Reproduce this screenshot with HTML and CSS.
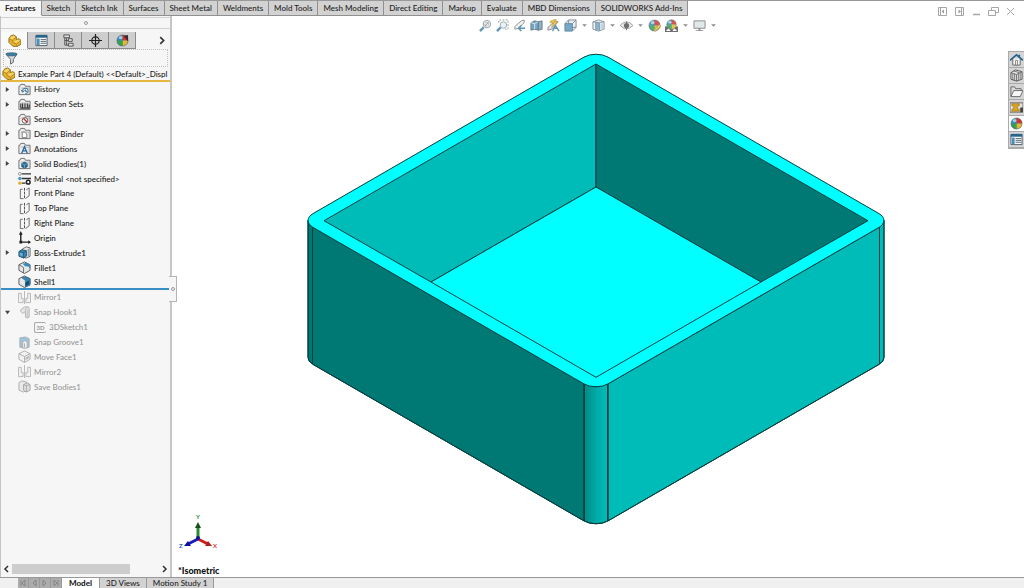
FILE: index.html
```
<!DOCTYPE html>
<html lang="en">
<head>
	<meta charset="UTF-8">
	<title>Example Part 4</title>
	<link rel="stylesheet" href="styles.css">
</head>
<body>
	<!-- icon symbols -->
	<svg class="defs" width="0" height="0" aria-hidden="true">
		<symbol id="part" viewBox="0 0 14 14">
			<path d="M1 5l2-3 3-1 3 2v3l3-1 2 2v4l-5 3-4-1-4-4z" fill="#e6b32e" stroke="#8c6a17"/>
			<path d="M1 5l4 2 4-4M5 7v2l4 2 5-4M9 11v3" fill="none" stroke="#a67f1e" stroke-width=".8"/>
			<path d="M3 3l3-1 2 1-3 3-3-1zM6 8l5-2 2 1-4 3z" fill="#f6d368"/>
		</symbol>
		<symbol id="list" viewBox="0 0 14 14">
			<path d="M1 1.500h12v11H1z" fill="#f4f8fa" stroke="#4c5b66"/>
			<path d="M1 1h12v3H1z" fill="#28658c"/>
			<path d="M2 5h3v7H2z" fill="#4a90b8"/>
			<path d="M6 6h6M6 8h6M6 10h6" stroke="#59666e"/>
		</symbol>
		<symbol id="config" viewBox="0 0 14 14">
			<path d="M2 1h6v3H2zM7 5h4v3H7zM7 10h5v3H7z" fill="#e4e4e4" stroke="#505050"/>
			<path d="M3 4v8h4M3 7h4M5 4v8" fill="none" stroke="#505050"/>
		</symbol>
		<symbol id="target" viewBox="0 0 14 14">
			<circle cx="7" cy="7" r="4" fill="none" stroke="#222" stroke-width="1.300"/>
			<path d="M7 0v14M0 7h14" stroke="#222" stroke-width="1.300"/>
		</symbol>
		<symbol id="ball" viewBox="0 0 14 14">
			<circle cx="7" cy="7" r="6" fill="#2f8fc0"/>
			<path d="M7 7V1a6 6 0 0 1 6 6z" fill="#d5342c"/>
			<path d="M7 7h6a6 6 0 0 1-6 6z" fill="#e6b82c"/>
			<path d="M7 7v6a6 6 0 0 1-6-6z" fill="#36a052"/>
			<circle cx="7" cy="7" r="6" fill="none" stroke="#666" stroke-width=".6"/>
			<ellipse cx="5" cy="4" rx="2" ry="1.500" fill="#fff" opacity=".6"/>
		</symbol>
		<symbol id="ball-dark" viewBox="0 0 14 14">
			<use href="#ball"/>
			<path d="M8 2l5-1v7z" fill="#40282a"/>
		</symbol>
		<symbol id="funnel" viewBox="0 0 14 14">
			<path d="M1 2l5 6v5l3-2V8l4-6z" fill="#d7dde0" stroke="#566067"/>
			<ellipse cx="7" cy="2.500" rx="6" ry="1.800" fill="#3a80a8" stroke="#35566a" stroke-width=".7"/>
		</symbol>
		<symbol id="folder" viewBox="0 0 14 14">
			<path d="M1 3.500h1l1-2h4l1 2h5v9H1z" fill="#ededed" stroke="#6c6c6c"/>
			<path d="M3 5.500h9v6" fill="none" stroke="#b3b3b3"/>
		</symbol>
		<symbol id="history" viewBox="0 0 14 14">
			<use href="#folder"/>
			<path d="M5 9a3 3 0 1 1 3 2.500M3.500 7.500L5 10l2-2M8 7v2h2" fill="none" stroke="#2d6d95"/>
		</symbol>
		<symbol id="sets" viewBox="0 0 14 14">
			<use href="#folder"/>
			<path d="M3 6v5h9V7M5 6v5M7.500 6v5M10 6v5" fill="none" stroke="#333" stroke-width="1.300"/>
		</symbol>
		<symbol id="sensor" viewBox="0 0 14 14">
			<use href="#folder"/>
			<circle cx="7.500" cy="8" r="3" fill="#fff" stroke="#555"/>
			<path d="M6 6l4 4" stroke="#c2352e" stroke-width="1.600"/>
		</symbol>
		<symbol id="binder" viewBox="0 0 14 14">
			<use href="#folder"/>
			<path d="M4.500 5.500h3l2 2v4h-5z" fill="#fff" stroke="#777"/>
		</symbol>
		<symbol id="annot" viewBox="0 0 14 14">
			<use href="#folder"/>
			<path d="M4 12l3-7 3 7M5 9.500h4" fill="none" stroke="#28699a" stroke-width="1.400"/>
		</symbol>
		<symbol id="bodies" viewBox="0 0 14 14">
			<use href="#folder"/>
			<path d="M4 7l3-1.500 3 1.500v3.500L7 12l-3-1.500z" fill="#286c99" stroke="#174b70" stroke-width=".7"/>
			<path d="M4 7l3 1.500L10 7M7 8.500V12" fill="none" stroke="#8fc0dc" stroke-width=".6"/>
		</symbol>
		<symbol id="material" viewBox="0 0 14 14">
			<path d="M4 2h10M4 7h10M4 12h4" stroke="#333" stroke-width="1.500"/>
			<circle cx="2" cy="2" r="1.500" fill="#fff" stroke="#777" stroke-width=".8"/>
			<circle cx="2" cy="7" r="1.800" fill="#4b9ac7"/>
			<circle cx="2" cy="12" r="1.800" fill="#dfb02c"/>
			<circle cx="11" cy="11" r="2" fill="#fff" stroke="#222" stroke-width="1.600"/>
		</symbol>
		<symbol id="plane" viewBox="0 0 14 14">
			<path d="M5 2.500H2.500v10H6M9 3l3-2v8.500L8 12.500" fill="none" stroke="#666"/>
			<path d="M7 1v12" stroke="#444" stroke-dasharray="3 1"/>
		</symbol>
		<symbol id="origin" viewBox="0 0 14 14">
			<path d="M3 3v9h10" fill="none" stroke="#222" stroke-width="1.500"/>
			<path d="M3 0L1 4h4zM14 12l-3-2v4zM1.500 10.500h3v3h-3z" fill="#222"/>
		</symbol>
		<symbol id="extrude" viewBox="0 0 14 14">
			<path d="M5 3l4-2 4 1v9l-4 2-4-1z" fill="#e9e9e9" stroke="#5b6265"/>
			<path d="M1 6l3-2 5 1v6l-3 2-5-2z" fill="#3d86b3" stroke="#21516f"/>
			<path d="M1 6l5 1 3-2M6 7v6M11 3v8" fill="none" stroke="#214f6c" stroke-width=".7"/>
			<path d="M2 7l3 1v3l-3-1z" fill="#6db0d6"/>
		</symbol>
		<symbol id="fillet" viewBox="0 0 14 14">
			<path d="M1 4l6-3 6 3v6l-6 3.500L1 10z" fill="#e6e8e9" stroke="#555"/>
			<path d="M1 4l5 3v6" fill="none" stroke="#666"/>
			<path d="M5 3l4-1 4 2v4Q11 5 8 6z" fill="#3b8ab9"/>
		</symbol>
		<symbol id="shell" viewBox="0 0 14 14">
			<path d="M1 4l6-3 6 3v6l-6 3.500L1 10z" fill="#e6e8e9" stroke="#555"/>
			<path d="M4 3l4-1 5 2v7l-5 2V6z" fill="#3984b2" stroke="#2a6287" stroke-width=".6"/>
			<path d="M8 8l4-2v4l-4 2z" fill="#154a6c"/>
		</symbol>
		<symbol id="mirror" viewBox="0 0 14 14">
			<path d="M.500 2.500v10h5V8H3.500V2.500zM13.500 2.500v10h-5V8h2V2.500z" fill="#eee" stroke="#777"/>
			<path d="M7 0v14" stroke="#555" stroke-width=".8"/>
		</symbol>
		<symbol id="hook" viewBox="0 0 14 14">
			<path d="M3 4l4-3h4l1 1v10l-2 1-2-1V6L5 8 3 6z" fill="#d5d5d5" stroke="#6f6f6f"/>
			<path d="M8 6V3l3-2M10 4v9" fill="none" stroke="#888"/>
		</symbol>
		<symbol id="groove" viewBox="0 0 14 14">
			<path d="M2 2l6-1 4 2v9l-5 1-5-1z" fill="#4993be" stroke="#5d6c75"/>
			<path d="M5 13V7l2-2 3 1v7zM7 8v4" fill="#e5e5e5" stroke="#666"/>
		</symbol>
		<symbol id="cube" viewBox="0 0 14 14">
			<path d="M1 4l6-3 6 3v6l-6 3.500L1 10z" fill="#ededed" stroke="#666"/>
			<path d="M1 4l6 3 6-3M7 7v6" fill="none" stroke="#666"/>
			<path d="M8 8l4-2v3l-4 2z" fill="#888"/>
		</symbol>
		<symbol id="save" viewBox="0 0 14 14">
			<path d="M1 3l3-2 5 1v9l-3 2-5-2z" fill="#ddd" stroke="#666"/>
			<path d="M6 5l4-2 3 2v6l-4 2-3-2z" fill="#cdcdcd" stroke="#555"/>
			<path d="M6 5l3 1 4-1M9 6v7" fill="none" stroke="#555"/>
		</symbol>
		<symbol id="zoom-fit" viewBox="0 0 14 14">
			<path d="M1 13l4-4" stroke="#4684ac" stroke-width="2.500"/>
			<circle cx="8.500" cy="5.500" r="4" fill="#f2f6f8" stroke="#7c868c"/>
			<path d="M7 4h3v3M7 7l3-3M6.500 5v2.500H9" fill="none" stroke="#777" stroke-width=".7"/>
		</symbol>
		<symbol id="zoom-area" viewBox="0 0 14 14">
			<path d="M1 13l4-4" stroke="#4684ac" stroke-width="2.500"/>
			<circle cx="8" cy="6.500" r="3.500" fill="#e5f0f6" stroke="#8a969c"/>
			<path d="M3 4V1h10v10h-3" fill="none" stroke="#8b8b8b" stroke-dasharray="2 1.500"/>
		</symbol>
		<symbol id="prev" viewBox="0 0 14 14">
			<path d="M2 8l7-6 3-1v3l-6 6-4 1z" fill="#eee" stroke="#7e7e7e"/>
			<path d="M13 10H6M9 7l-3 3 3 3" fill="none" stroke="#437fa7" stroke-width="1.600"/>
		</symbol>
		<symbol id="section" viewBox="0 0 14 14">
			<path d="M1 4l4-2 4 1v9l-4-1-4 1z" fill="#5c97bd" stroke="#50636e"/>
			<path d="M1 4l4 1 4-2M5 5v6" fill="none" stroke="#d3e2eb"/>
			<path d="M9 3l4-1v9l-4 1z" fill="#78a5c1" stroke="#4e6472"/>
		</symbol>
		<symbol id="dynamic" viewBox="0 0 14 14">
			<path d="M1 9l8-7 3 1-7 8-4 1z" fill="#ddd" stroke="#777"/>
			<path d="M4 2l6-2-2 3h4l-7 6 2-5H3z" fill="#eac03c" stroke="#a98117" stroke-width=".6"/>
			<path d="M6 13l3-6 4 6M8 10h3" fill="none" stroke="#4883a8" stroke-width="1.500"/>
		</symbol>
		<symbol id="orient" viewBox="0 0 14 14">
			<path d="M4 1h9v8l-4 4V5H1z" fill="#e4edf2"/>
			<path d="M1 5h8v8H1z" fill="#5e9abf" stroke="#4a7088"/>
			<path d="M1 5l4-4h8v8l-4 4M9 5l4-4M5 1v4M9 9h4" fill="none" stroke="#687782"/>
		</symbol>
		<symbol id="display" viewBox="0 0 14 14">
			<path d="M1 3l6-2 6 2v8l-6 2-6-2z" fill="#e9eff3" stroke="#6f7d85"/>
			<path d="M4 3l4 1v9l-4-1z" fill="#75a9c9"/>
			<path d="M1 3l7 1 5-1M4 3v9M8 4v9" fill="none" stroke="#65747d" stroke-width=".8"/>
			<path d="M9 5l3-1v7l-3 1z" fill="#b5d2e3"/>
		</symbol>
		<symbol id="eye" viewBox="0 0 14 14">
			<path d="M0 7q7-8 14 0-7 7-14 0z" fill="#e4e4e4" stroke="#8d8d8d"/>
			<circle cx="7" cy="7" r="2.800" fill="#555"/>
			<path d="M7 3v9" stroke="#555"/>
		</symbol>
		<symbol id="appearance" viewBox="0 0 14 14">
			<use href="#ball"/>
			<path d="M6 12l6-6 2 2-6 5z" fill="#e8c149" stroke="#8f7540" stroke-width=".7"/>
		</symbol>
		<symbol id="scene" viewBox="0 0 14 14">
			<path d="M0 8h14v6H0z" fill="#555"/>
			<path d="M1 13l3-3 2 3zM8 13l2-3 3 3z" fill="#fff"/>
			<use href="#ball" x="1" width="12" height="12"/>
		</symbol>
		<symbol id="monitor" viewBox="0 0 14 14">
			<path d="M1 2h12v8H1z" fill="#dce2e5" stroke="#777"/>
			<path d="M6 10h2v2h3v1H3v-1h3z" fill="#777"/>
		</symbol>
		<symbol id="home" viewBox="0 0 14 14">
			<path d="M3 6v7h8V6" fill="#f4f4f4" stroke="#666"/>
			<path d="M0 8l7-6 7 6M10 2v3" fill="none" stroke="#25648b" stroke-width="1.800"/>
			<path d="M6 8h2v5H6z" fill="#fff" stroke="#666" stroke-width=".8"/>
		</symbol>
		<symbol id="library" viewBox="0 0 14 14">
			<path d="M1 4l5-3 7 2v8l-6 2-6-2z" fill="#e5e5e5" stroke="#555"/>
			<path d="M1 4l6 2 6-3M3 5v7M5 5v7M7 6v7M9 5v7M11 4v7M4 2l6 2" fill="none" stroke="#555" stroke-width=".8"/>
		</symbol>
		<symbol id="open" viewBox="0 0 14 14">
			<path d="M1 12V2h4l1 2h6v2" fill="#ddd" stroke="#666"/>
			<path d="M1 12.500L4 6h10l-3 6.500z" fill="#f7f7f7" stroke="#666"/>
		</symbol>
		<symbol id="palette" viewBox="0 0 14 14">
			<path d="M0 2h14v10H0z" fill="#e2e2e2" stroke="#666"/>
			<path d="M2 3h8v2L8 6v2l2 1v2H2V9l2-1V6L2 5z" fill="#dca521" stroke="#8e691a" stroke-width=".6"/>
			<path d="M11 7h3v5h-3z" fill="#444"/>
		</symbol>
		<symbol id="tri" viewBox="0 0 6 6"><path d="M1 0l4 3-4 3z" fill="#444"/></symbol>
		<symbol id="tri-down" viewBox="0 0 6 6"><path d="M0 1h6L3 5z" fill="#444"/></symbol>
		<symbol id="drop" viewBox="0 0 6 6"><path d="M1 2h4L3 4z" fill="#777"/></symbol>
		<symbol id="right" viewBox="0 0 6 8"><path d="M1 1l3 3-3 3" fill="none" stroke="#333" stroke-width="1.500"/></symbol>
		<symbol id="left" viewBox="0 0 6 8"><path d="M5 1L2 4l3 3" fill="none" stroke="#333" stroke-width="1.500"/></symbol>
	</svg>

	<nav class="ribbon">
		<button class="active">Features</button>
		<button>Sketch</button>
		<button>Sketch Ink</button>
		<button>Surfaces</button>
		<button>Sheet Metal</button>
		<button>Weldments</button>
		<button>Mold Tools</button>
		<button>Mesh Modeling</button>
		<button>Direct Editing</button>
		<button>Markup</button>
		<button>Evaluate</button>
		<button>MBD Dimensions</button>
		<button>SOLIDWORKS Add-Ins</button>
	</nav>

	<main class="work">
		<aside class="panel">
			<div class="grip"><i></i></div>
			<div class="panel-tabs">
				<button class="active" aria-label="Feature tree"><svg><use href="#part"/></svg></button>
				<button aria-label="Properties"><svg><use href="#list"/></svg></button>
				<button aria-label="Configurations"><svg><use href="#config"/></svg></button>
				<button aria-label="Dimensions"><svg><use href="#target"/></svg></button>
				<button aria-label="Display"><svg><use href="#ball-dark"/></svg></button>
				<button class="more" aria-label="More tabs"><svg><use href="#right"/></svg></button>
			</div>
			<label class="filter">
				<svg><use href="#funnel"/></svg>
				<input type="text" aria-label="Filter tree">
			</label>
			<div class="root"><svg><use href="#part"/></svg><span>Example Part 4 (Default) &lt;&lt;Default&gt;_Displ</span></div>
			<ul class="tree">
				<li><button aria-label="Expand"><svg><use href="#tri"/></svg></button><svg><use href="#history"/></svg>History</li>
				<li><button aria-label="Expand"><svg><use href="#tri"/></svg></button><svg><use href="#sets"/></svg>Selection Sets</li>
				<li><svg><use href="#sensor"/></svg>Sensors</li>
				<li><button aria-label="Expand"><svg><use href="#tri"/></svg></button><svg><use href="#binder"/></svg>Design Binder</li>
				<li><button aria-label="Expand"><svg><use href="#tri"/></svg></button><svg><use href="#annot"/></svg>Annotations</li>
				<li><button aria-label="Expand"><svg><use href="#tri"/></svg></button><svg><use href="#bodies"/></svg>Solid Bodies(1)</li>
				<li><svg><use href="#material"/></svg>Material &lt;not specified&gt;</li>
				<li><svg><use href="#plane"/></svg>Front Plane</li>
				<li><svg><use href="#plane"/></svg>Top Plane</li>
				<li><svg><use href="#plane"/></svg>Right Plane</li>
				<li><svg><use href="#origin"/></svg>Origin</li>
				<li><button aria-label="Expand"><svg><use href="#tri"/></svg></button><svg><use href="#extrude"/></svg>Boss-Extrude1</li>
				<li><svg><use href="#fillet"/></svg>Fillet1</li>
				<li class="rollback"><svg><use href="#shell"/></svg>Shell1</li>
				<li class="off"><svg><use href="#mirror"/></svg>Mirror1</li>
				<li class="off"><button aria-label="Collapse"><svg><use href="#tri-down"/></svg></button><svg><use href="#hook"/></svg>Snap Hook1</li>
				<li class="off child"><span class="badge">3D</span>3DSketch1</li>
				<li class="off"><svg><use href="#groove"/></svg>Snap Groove1</li>
				<li class="off"><svg><use href="#cube"/></svg>Move Face1</li>
				<li class="off"><svg><use href="#mirror"/></svg>Mirror2</li>
				<li class="off"><svg><use href="#save"/></svg>Save Bodies1</li>
			</ul>
			<div class="scroll">
				<button aria-label="Scroll left"><svg><use href="#left"/></svg></button>
				<div class="track"><div class="thumb"></div></div>
				<button aria-label="Scroll right"><svg><use href="#right"/></svg></button>
			</div>
			<button class="handle" aria-label="Hide panel"><i></i></button>
		</aside>

		<section class="view">
			<svg class="model" viewBox="172 16 852 561">
				<defs>
					<linearGradient id="corner">
						<stop offset="0" stop-color="#008783"/>
						<stop offset=".5" stop-color="#00aaa7"/>
						<stop offset="1" stop-color="#00bcb9"/>
					</linearGradient>
				</defs>
				<!-- side walls -->
				<path fill="#007975" d="M313 227.400L584 383.900V520.900L313 364.400A17 9.800 0 0 1 308 357.500V220.500z"/>
				<path fill="#00bcb9" d="M879 227.400L608 383.900V520.900L879 364.400A17 9.800 0 0 0 884 357.500V220.500z"/>
				<path fill="url(#corner)" d="M584 383.900A17 9.800 0 0 0 608 383.900V520.900A17 9.800 0 0 1 584 520.900z"/>
				<path d="M312.500 227V364M584.500 384V521M607.500 384V521M879.500 227V364"/>
				<!-- rim -->
				<path fill="#0ff" d="M313 213.600L584 57.100A17 9.800 0 0 1 608 57.100L879 213.600A17 9.800 0 0 1 879 227.400L608 383.900A17 9.800 0 0 1 584 383.900L313 227.400A17 9.800 0 0 1 313 213.600z"/>
				<!-- inside -->
				<path fill="#00bcb9" d="M324 220.700L596 64V187L431 282z"/>
				<path fill="#007975" d="M868 220.700L596 64V187L761 282z"/>
				<path fill="#0ff" d="M596 187L761 282 596 377.300 431 282z"/>
				<path d="M308 220.500V357.500A17 9.800 0 0 0 313 364.400L584 520.900A17 9.800 0 0 0 608 520.900L879 364.400A17 9.800 0 0 0 884 357.500V220.500"/>
			</svg>

			<div class="heads-up">
				<button aria-label="Zoom to fit"><svg><use href="#zoom-fit"/></svg></button>
				<button aria-label="Zoom to area"><svg><use href="#zoom-area"/></svg></button>
				<button aria-label="Previous view"><svg><use href="#prev"/></svg></button>
				<button aria-label="Section view"><svg><use href="#section"/></svg></button>
				<button aria-label="Dynamic annotation"><svg><use href="#dynamic"/></svg></button>
				<button aria-label="View orientation"><svg><use href="#orient"/></svg><svg class="drop"><use href="#drop"/></svg></button>
				<button aria-label="Display style"><svg><use href="#display"/></svg><svg class="drop"><use href="#drop"/></svg></button>
				<button aria-label="Hide items"><svg><use href="#eye"/></svg><svg class="drop"><use href="#drop"/></svg></button>
				<button aria-label="Edit appearance"><svg><use href="#appearance"/></svg></button>
				<button aria-label="Apply scene"><svg><use href="#scene"/></svg><svg class="drop"><use href="#drop"/></svg></button>
				<button aria-label="View settings"><svg><use href="#monitor"/></svg><svg class="drop"><use href="#drop"/></svg></button>
			</div>

			<div class="win">
				<button aria-label="Dock left"><svg viewBox="0 0 11 11"><path d="M1.500 1.500h8v8h-8zM3.500 2v7"/><path d="M7 3.500v4L4.500 5.500z" fill="#999" stroke="none"/></svg></button>
				<button aria-label="Dock right"><svg viewBox="0 0 11 11"><path d="M1.500 1.500h8v8h-8zM7.500 2v7"/><path d="M4.500 3.500v4L7 5.500z" fill="#999" stroke="none"/></svg></button>
				<button aria-label="Minimize"><svg viewBox="0 0 11 11"><path d="M2 8.500h7" stroke-width="1.500"/></svg></button>
				<button aria-label="Restore"><svg viewBox="0 0 11 11"><path d="M3.500 4V1.500h7v5H8M.500 4.500h7v5h-7z"/></svg></button>
				<button aria-label="Close"><svg viewBox="0 0 11 11"><path d="M2 2l7 7M9 2L2 9"/></svg></button>
			</div>

			<div class="task">
				<button aria-label="Home"><svg><use href="#home"/></svg></button>
				<button aria-label="Design library"><svg><use href="#library"/></svg></button>
				<button aria-label="File explorer"><svg><use href="#open"/></svg></button>
				<button aria-label="View palette"><svg><use href="#palette"/></svg></button>
				<button class="active" aria-label="Appearances"><svg><use href="#ball"/></svg></button>
				<button aria-label="Custom properties"><svg><use href="#list"/></svg></button>
			</div>

			<div class="orientation">
				<svg class="triad" viewBox="0 0 42 38">
					<path d="M20 24V12" stroke="#2c8a35" stroke-width="3"/>
					<path d="M20 8l3 6h-6z" fill="#164f1b"/>
					<path d="M20 25l10 5" stroke="#c9201c" stroke-width="3"/>
					<path d="M34 32l-7 0 3-5z" fill="#b51b18"/>
					<path d="M20 25l-10 5" stroke="#1a1ac0" stroke-width="3"/>
					<path d="M6 32l7 0-3-5z" fill="#0e0ea0"/>
					<circle cx="20" cy="24" r="2" fill="#151590"/>
					<text x="18" y="5" fill="#2c8a35">Y</text>
					<text x="35" y="34" fill="#d8403a">X</text>
					<text x="1" y="34" fill="#2464b8">Z</text>
				</svg>
				<strong>*Isometric</strong>
			</div>
		</section>
	</main>

	<footer class="sheets">
		<div class="nav">
			<button disabled aria-label="First"><svg viewBox="0 0 8 8"><path d="M2 1v6M6 1L3 4l3 3z"/></svg></button>
			<button disabled aria-label="Previous"><svg viewBox="0 0 8 8"><path d="M6 1L3 4l3 3z"/></svg></button>
			<button disabled aria-label="Next"><svg viewBox="0 0 8 8"><path d="M2 1l3 3-3 3z"/></svg></button>
			<button disabled aria-label="Last"><svg viewBox="0 0 8 8"><path d="M6 1v6M2 1l3 3-3 3z"/></svg></button>
		</div>
		<button class="active">Model</button>
		<button>3D Views</button>
		<button>Motion Study 1</button>
	</footer>
</body>
</html>
```
FILE: styles.css
```
* {
	margin: 0;
	padding: 0;
	box-sizing: border-box;
	list-style: none;
}
body {
	display: flex;
	flex-direction: column;
	height: 100vh;
	overflow: hidden;
	font: 500 8px/12px Lato, "Open Sans", sans-serif;
	color: #222;
	background-color: #fff;
}
button {
	border: 0;
	background: none;
	font: inherit;
	color: inherit;
}
svg {
	display: block;
	flex: none;
}
.defs {
	position: absolute;
}

/* command tabs */
.ribbon {
	display: flex;
	height: 16px;
	border-top: 1px solid #999;
}
.ribbon button {
	padding: 0 5px;
	border-right: 1px solid #909090;
	border-bottom: 1px solid #909090;
	background-color: #d2d2d2;
	white-space: nowrap;
}
.ribbon .active {
	background-color: #f7f7f7;
	border-bottom-color: #f7f7f7;
	font-weight: 700;
}
.work {
	display: flex;
	flex: 1;
	min-height: 0;
}

/* feature manager */
.panel {
	display: flex;
	flex-direction: column;
	position: relative;
	width: 172px;
	flex: none;
	border-left: 1px solid #c4c4c4;
	border-right: 2px solid #c6c6c6;
	background-color: #f6f6f6;
}
.grip {
	display: flex;
	align-items: center;
	justify-content: center;
	height: 12px;
	margin-top: 1px;
	border-top: 1px solid #d0d0d0;
	border-bottom: 1px solid #d0d0d0;
}
.grip i, .handle i {
	width: 4px;
	height: 4px;
	border: 1px solid #999;
	border-radius: 50%;
}
.panel-tabs {
	display: flex;
	height: 17px;
	margin-top: 3px;
}
.panel-tabs button {
	display: flex;
	align-items: center;
	justify-content: center;
	width: 27px;
	border-right: 1px solid #8b8b8b;
	border-bottom: 1px solid #8b8b8b;
	background-color: #cecece;
}
.panel-tabs svg {
	width: 13px;
	height: 13px;
}
.panel-tabs .active {
	background-color: #fafafa;
	border-bottom-color: #fafafa;
}
.panel-tabs .more {
	margin-left: auto;
	width: 16px;
	border: 0;
	background: none;
}
.panel-tabs .more svg {
	width: 7px;
	height: 9px;
}
.filter {
	display: flex;
	align-items: center;
	height: 18px;
	margin: 0 2px;
	border: 1px dotted #c2c2c2;
}
.filter svg {
	width: 13px;
	height: 13px;
	margin-left: 1px;
}
.filter input {
	flex: 1;
	min-width: 0;
	border: 0;
	background: none;
	font: inherit;
	outline: 0;
}
.root {
	display: flex;
	align-items: center;
	gap: 3px;
	height: 15px;
	padding-left: 1px;
	border-bottom: 2px solid #e5b73f;
	white-space: nowrap;
}
.root svg, .tree svg {
	width: 13px;
	height: 13px;
}
.tree {
	display: grid;
	grid-auto-rows: 1fr;
	height: 312px;
}
.tree li {
	display: flex;
	align-items: center;
	gap: 3px;
	position: relative;
	padding-left: 17px;
	white-space: nowrap;
}
.tree li button {
	position: absolute;
	left: 4px;
}
.tree li button svg {
	width: 5px;
	height: 5px;
}
.tree .rollback {
	border-bottom: 2px solid #3a8ec6;
}
.tree .off {
	color: #999;
}
.tree .off > svg {
	opacity: .5;
}
.tree .child {
	padding-left: 33px;
}
.badge {
	width: 12px;
	border: 1px solid #aaa;
	border-right: 0;
	border-radius: 2px;
	font-size: 6px;
	font-weight: 700;
	line-height: 9px;
	text-align: center;
}
.scroll {
	display: flex;
	align-items: center;
	gap: 3px;
	height: 14px;
	margin: auto 0 1px;
	padding: 0 2px;
}
.scroll button svg {
	width: 6px;
	height: 8px;
}
.track {
	flex: 1;
	height: 10px;
}
.thumb {
	width: 80%;
	height: 10px;
	background-color: #cdcdcd;
}
.handle {
	display: flex;
	align-items: center;
	justify-content: center;
	position: absolute;
	left: 168px;
	top: 260px;
	width: 8px;
	height: 26px;
	border: 1px solid #b5b5b5;
	border-left: 0;
	background-color: #f6f6f6;
	z-index: 1;
}

/* graphics area */
.view {
	flex: 1;
	position: relative;
	min-width: 0;
}
.model {
	width: 100%;
	height: 100%;
	fill: none;
	stroke: #043f3e;
	stroke-linejoin: round;
}
.heads-up {
	display: flex;
	justify-content: center;
	position: absolute;
	top: 3px;
	left: 0;
	right: 0;
}
.heads-up button {
	display: flex;
	align-items: center;
	padding: 0 2px;
}
.heads-up svg {
	width: 13px;
	height: 13px;
	opacity: .85;
}
.heads-up .drop {
	width: 7px;
	height: 7px;
	margin-left: 4px;
}
.win {
	display: flex;
	gap: 6px;
	position: absolute;
	top: -10px;
	right: 8px;
}
.win svg {
	width: 11px;
	height: 11px;
	fill: none;
	stroke: #a5a5a5;
}
.task {
	position: absolute;
	top: 35px;
	right: 0;
	width: 16px;
	border: 1px solid #aaa;
	border-right: 0;
}
.task button {
	display: flex;
	align-items: center;
	justify-content: center;
	width: 15px;
	height: 16px;
	border-bottom: 1px solid #aaa;
	background-color: #d5d5d5;
}
.task .active {
	background-color: #fff;
}
.task svg {
	width: 13px;
	height: 13px;
}
.orientation {
	position: absolute;
	left: 6px;
	bottom: 0;
}
.orientation strong {
	display: block;
	font: 900 9px/12px Lato, sans-serif;
	color: #111;
}
.triad {
	width: 42px;
	height: 38px;
	margin-bottom: 13px;
	font-size: 6px;
	font-weight: 700;
	overflow: visible;
}

/* document tabs */
.sheets {
	display: flex;
	height: 11px;
	padding-left: 18px;
	border-top: 1px solid #999;
	background-color: #f0f0f0;
	line-height: 10px;
}
.sheets > button {
	padding: 0 6px;
	border-right: 1px solid #999;
	background-color: #d2d2d2;
	white-space: nowrap;
}
.sheets > .active {
	padding: 0 7px;
	background-color: #fff;
	font-weight: 900;
}
.nav {
	display: flex;
	background-color: #ababab;
}
.nav button {
	width: 11px;
	border-right: 1px solid #999;
}
.nav svg {
	width: 8px;
	height: 8px;
	margin: 0 1px;
	fill: none;
	stroke: #858585;
}
```
